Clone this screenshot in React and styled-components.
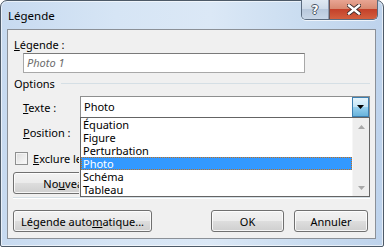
import React from 'react';
import styled, { createGlobalStyle } from 'styled-components';

const Global = createGlobalStyle`
  html, body { margin: 0; padding: 0; background: #fff; }
  body { font-family: "Segoe UI", "Noto Sans", sans-serif; font-size: 11px; color: #000; }
  * { box-sizing: border-box; }
`;

const Window = styled.div`
  width: 384px;
  height: 247px;
  border: 1px solid #4d5a68;
  border-radius: 7px 7px 2px 2px;
  background: linear-gradient(90deg, #c7daf0 0%, #d6e5f5 30%, #dbe8f6 55%, #c9dcf0 80%, #bed3ec 100%);
  padding: 0 7px 7px 6px;
  display: flex;
  flex-direction: column;
  box-shadow: inset 0 0 0 1px rgba(255,255,255,.6);
`;

const TitleBar = styled.div`
  height: 28px;
  display: flex;
  align-items: flex-start;
  margin-right: -2px;
`;

const Title = styled.div`
  flex: 1;
  padding: 7px 0 0 1px;
  font-size: 11.5px;
  line-height: 15px;
`;

const Caption = styled.div`
  display: flex;
  margin-top: -1px;
  border: 1px solid #5b6b7f;
  border-top: none;
  border-radius: 0 0 5px 5px;
  overflow: hidden;
  box-shadow: 0 1px 0 rgba(255,255,255,.7);
`;

const CapBtn = styled.div`
  height: 19px;
  width: ${p => p.$w}px;
  display: flex;
  align-items: center;
  justify-content: center;
  background: ${p => p.$red
    ? 'linear-gradient(#e8a593 0%, #d88a72 45%, #c4412a 50%, #d3603f 100%)'
    : 'linear-gradient(#dfe8f2 0%, #cfdbe9 45%, #b8c8dc 50%, #c8d6e7 100%)'};
  border-left: ${p => p.$red ? '1px solid #6b5050' : 'none'};
  border-right: ${p => p.$red ? 'none' : '1px solid #8d9bb0'};
  color: #fff;
  font-family: "DejaVu Sans", sans-serif;
  font-weight: bold;
  font-size: 12px;
  text-shadow: 1px 0 0 #4a5564, -1px 0 0 #4a5564, 0 1px 0 #4a5564, 0 -1px 0 #4a5564;
`;

const Client = styled.div`
  position: relative;
  width: 369px;
  height: 210px;
  border: 1px solid #8b9097;
  background: #f0f0f0;
  display: flex;
  flex-direction: column;
  padding: 0 5px 0 5px;
`;

const Label = styled.div`
  margin-top: ${p => p.$mt || 0}px;
  padding-left: 1px;
  line-height: 15px;
  height: 15px;
  white-space: nowrap;
`;

const TextInput = styled.div`
  margin: 1px 0 0 10px;
  width: 282px;
  height: 20px;
  background: #fff;
  border: 1px solid #7f7f7f;
  border-color: #7a7a7a #a8a8a8 #a8a8a8 #a8a8a8;
  padding-left: 3px;
  line-height: 18px;
  font-style: italic;
  color: #6d6d6d;
`;

const GroupHead = styled.div`
  margin-top: 3px;
  height: 15px;
  line-height: 15px;
  display: flex;
  align-items: center;
  gap: 6px;
  padding-left: 1px;
  &::after {
    content: '';
    flex: 1;
    height: 1px;
    background: #d5dfe5;
  }
`;

const FieldRow = styled.div`
  margin-top: ${p => p.$mt}px;
  display: flex;
  align-items: center;
  height: 22px;
  padding-left: 10px;
`;

const FieldLabel = styled.div`
  width: 57px;
  line-height: 15px;
`;

const Combo = styled.div`
  width: 290px;
  height: 22px;
  background: #fff;
  border: 1px solid #8e8f8f;
  display: flex;
  align-items: stretch;
`;

const ComboText = styled.div`
  flex: 1;
  padding-left: 3px;
  line-height: 19px;
`;

const DropBtn = styled.div`
  width: 17px;
  border: 1px solid #3c7fb1;
  background: linear-gradient(#e5f4fc 0%, #c4e5f6 50%, #98d1ef 51%, #68b3db 100%);
  display: flex;
  align-items: center;
  justify-content: center;
`;

/* parts of the form that run under the open list are clipped at its left edge */
const Clip = styled.div`
  width: ${p => p.$w}px;
  overflow: hidden;
  flex-shrink: 0;
`;

const CheckRow = styled.label`
  margin-top: 9px;
  display: flex;
  align-items: center;
  gap: 5px;
  height: 13px;
  padding-left: 2px;
  white-space: nowrap;
`;

const CheckBox = styled.span`
  flex-shrink: 0;
  width: 13px;
  height: 13px;
  border: 1px solid #8e8f8f;
  background: linear-gradient(135deg, #dcdcdc, #fbfbfb);
  box-shadow: inset 0 0 0 1px #f4f4f4;
`;

const Button = styled.div`
  flex-shrink: 0;
  width: ${p => p.$w}px;
  height: 22px;
  margin-top: ${p => p.$mt || 0}px;
  margin-left: ${p => p.$ml || 0}px;
  border: 1px solid #707070;
  border-radius: 3px;
  background: linear-gradient(#f2f2f2 0%, #ebebeb 48%, #dddddd 52%, #cfcfcf 100%);
  box-shadow: inset 0 0 0 1px rgba(255,255,255,.8);
  display: flex;
  align-items: center;
  justify-content: center;
  line-height: 15px;
  white-space: nowrap;
`;

const Separator = styled.div`
  margin-top: 3px;
  height: 2px;
  border-top: 1px solid #d5dfe5;
  border-bottom: 1px solid #fff;
`;

const Footer = styled.div`
  margin-top: 11px;
  display: flex;
  align-items: center;
`;

const List = styled.div`
  position: absolute;
  left: 72px;
  top: 87px;
  width: 290px;
  height: 80px;
  border: 1px solid #646464;
  background: #fff;
  display: flex;
`;

const Items = styled.div`
  flex: 1;
  display: flex;
  flex-direction: column;
`;

const Item = styled.div`
  height: 13px;
  line-height: 13px;
  padding-left: 2px;
  background: ${p => p.$sel ? '#3399ff' : 'transparent'};
  color: ${p => p.$sel ? '#fff' : '#000'};
  outline: ${p => p.$sel ? '1px dotted #c07020' : 'none'};
  outline-offset: -1px;
`;

const ScrollBar = styled.div`
  width: 17px;
  background: #eeeeee;
  border-left: 1px solid #f6f6f6;
  display: flex;
  flex-direction: column;
  justify-content: space-between;
  align-items: center;
  padding: 7px 0 6px;
`;

const Arrow = ({ down }) => (
  <svg width="7" height="4" viewBox="0 0 7 4">
    <path d={down ? 'M0 0h7L3.5 4z' : 'M0 4h7L3.5 0z'} fill="#a8a8a8" />
  </svg>
);

const items = ['Équation', 'Figure', 'Perturbation', 'Photo', 'Schéma', 'Tableau'];

export default function App() {
  return (
    <>
      <Global />
      <Window>
        <TitleBar>
          <Title>Légende</Title>
          <Caption>
            <CapBtn $w={27}>?</CapBtn>
            <CapBtn $w={48} $red>
              <svg width="14" height="11" viewBox="0 0 14 11">
                <path d="M2 1.5 L12 9.5 M12 1.5 L2 9.5" stroke="#3a2a2a" strokeWidth="4.2" strokeLinecap="square" />
                <path d="M2 1.5 L12 9.5 M12 1.5 L2 9.5" stroke="#fff" strokeWidth="2.4" strokeLinecap="square" />
              </svg>
            </CapBtn>
          </Caption>
        </TitleBar>
        <Client>
          <Label $mt={7}><u>L</u>égende :</Label>
          <TextInput>Photo 1</TextInput>
          <GroupHead>Options</GroupHead>
          <FieldRow $mt={5}>
            <FieldLabel><u>T</u>exte :</FieldLabel>
            <Combo>
              <ComboText>Photo</ComboText>
              <DropBtn>
                <svg width="7" height="4" viewBox="0 0 7 4"><path d="M0 0h7L3.5 4z" fill="#000" /></svg>
              </DropBtn>
            </Combo>
          </FieldRow>
          <FieldRow $mt={3}>
            <FieldLabel><u>P</u>osition :</FieldLabel>
            <Combo />
          </FieldRow>
          <CheckRow>
            <CheckBox />
            <Clip $w={46}><u>E</u>xclure le nom de l'étiquette</Clip>
          </CheckRow>
          <Clip $w={66} style={{ marginTop: 7 }}>
            <Button $w={116}>No<u>u</u>veau...</Button>
          </Clip>
          <Separator />
          <Footer>
            <Button $w={139}>Légende auto<u>m</u>atique...</Button>
            <Button $w={73} $ml={59}>OK</Button>
            <Button $w={74} $ml={10}>Annuler</Button>
          </Footer>
          <List>
            <Items>
              {items.map(t => <Item key={t} $sel={t === 'Photo'}>{t}</Item>)}
            </Items>
            <ScrollBar>
              <Arrow />
              <Arrow down />
            </ScrollBar>
          </List>
        </Client>
      </Window>
    </>
  );
}
